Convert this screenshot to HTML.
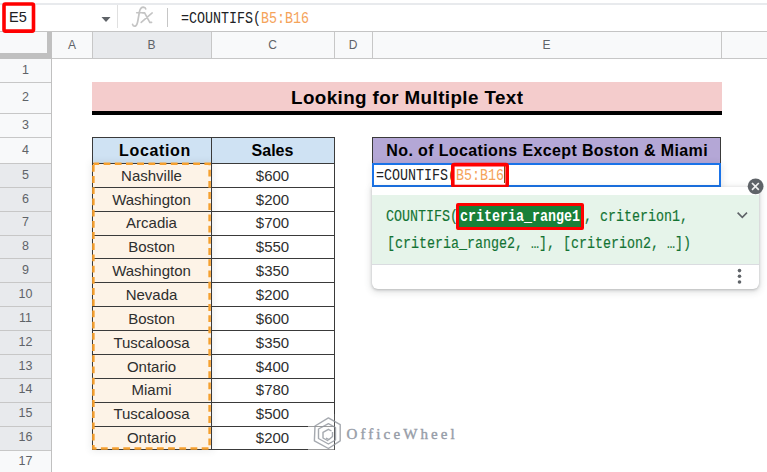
<!DOCTYPE html><html><head><meta charset="utf-8"><style>
*{margin:0;padding:0;box-sizing:border-box}
html,body{width:767px;height:472px;overflow:hidden;background:#fff;position:relative;font-family:"Liberation Sans",sans-serif}
.a{position:absolute}
.t{position:absolute;white-space:nowrap}
.mono{font-family:"Liberation Mono",monospace}
</style></head><body><div class="a" style="left:0;top:3px;width:767px;height:2px;background:#e8eaed"></div>
<div class="a" style="left:0;top:31px;width:767px;height:1px;background:#c4c4c4"></div>
<div class="t" style="left:9px;top:9px;font-size:14.5px;line-height:17px;color:#202124">E5</div>
<svg class="a" style="left:100px;top:15px" width="12" height="8"><path d="M1.5 2 L10.5 2 L6 7 Z" fill="#5f6368"/></svg>
<div class="a" style="left:117px;top:5px;width:1px;height:23px;background:#e0e0e0"></div>
<div class="a" style="left:167px;top:8px;width:1px;height:19px;background:#c6c6c6"></div>
<svg class="a" style="left:0;top:0" width="170" height="31"><g fill="none" stroke="#c4c4c4" stroke-linecap="round"><path d="M132.6 24.4 Q133.3 26.6 135.3 26.1 Q137.1 25.4 137.9 20.5 L139.5 11.5 Q140.6 7.2 143.3 7.2 Q145.4 7.3 145.7 8.9" stroke-width="1.7"/><path d="M136.6 12.7 L143.2 12.7" stroke-width="1.5"/><path d="M143 12.9 L144.6 12.9 L149.8 22.4 L151.6 22.4 M141.2 22.4 L152.2 12.9" stroke-width="1.6"/></g></svg>
<div class="t mono" style="left:180.5px;top:10.6px;font-size:16px;line-height:16px;transform:scaleX(0.8333);transform-origin:0 0;color:#202124;">=COUNTIFS(<span style="color:#f5a35a">B5:B16</span></div>
<div class="a" style="left:0;top:32px;width:767px;height:26px;background:#f8f9fa"></div>
<div class="a" style="left:93px;top:32px;width:118px;height:26px;background:#e8eaed"></div>
<div class="a" style="left:0;top:58px;width:767px;height:1px;background:#c7c7c7"></div>
<div class="a" style="left:92px;top:32px;width:1px;height:27px;background:#c7c7c7"></div>
<div class="a" style="left:211px;top:32px;width:1px;height:27px;background:#c7c7c7"></div>
<div class="a" style="left:334px;top:32px;width:1px;height:27px;background:#c7c7c7"></div>
<div class="a" style="left:372px;top:32px;width:1px;height:27px;background:#c7c7c7"></div>
<div class="a" style="left:721px;top:32px;width:1px;height:27px;background:#c7c7c7"></div>
<div class="t" style="left:52px;width:40px;text-align:center;top:38px;font-size:12px;line-height:14px;color:#5f6368">A</div>
<div class="t" style="left:92px;width:119px;text-align:center;top:38px;font-size:12px;line-height:14px;color:#5f6368">B</div>
<div class="t" style="left:211px;width:123px;text-align:center;top:38px;font-size:12px;line-height:14px;color:#5f6368">C</div>
<div class="t" style="left:334px;width:38px;text-align:center;top:38px;font-size:12px;line-height:14px;color:#5f6368">D</div>
<div class="t" style="left:372px;width:349px;text-align:center;top:38px;font-size:12px;line-height:14px;color:#5f6368">E</div>
<div class="a" style="left:47px;top:32px;width:5px;height:27px;background:#c0c0c0"></div>
<div class="a" style="left:0;top:53px;width:52px;height:6px;background:#c0c0c0"></div>
<div class="a" style="left:0;top:59px;width:51px;height:23px;background:#f8f9fa"></div>
<div class="a" style="left:0;top:82px;width:51px;height:1px;background:#c7c7c7"></div>
<div class="t" style="left:0;width:51px;text-align:center;top:62.5px;font-size:12.5px;line-height:15px;color:#5f6368">1</div>
<div class="a" style="left:0;top:83px;width:51px;height:30px;background:#f8f9fa"></div>
<div class="a" style="left:0;top:113px;width:51px;height:1px;background:#c7c7c7"></div>
<div class="t" style="left:0;width:51px;text-align:center;top:90.2px;font-size:12.5px;line-height:15px;color:#5f6368">2</div>
<div class="a" style="left:0;top:114px;width:51px;height:23px;background:#f8f9fa"></div>
<div class="a" style="left:0;top:137px;width:51px;height:1px;background:#c7c7c7"></div>
<div class="t" style="left:0;width:51px;text-align:center;top:117.5px;font-size:12.5px;line-height:15px;color:#5f6368">3</div>
<div class="a" style="left:0;top:138px;width:51px;height:25px;background:#f8f9fa"></div>
<div class="a" style="left:0;top:163px;width:51px;height:1px;background:#c7c7c7"></div>
<div class="t" style="left:0;width:51px;text-align:center;top:142.5px;font-size:12.5px;line-height:15px;color:#5f6368">4</div>
<div class="a" style="left:0;top:164px;width:51px;height:23px;background:#e8eaed"></div>
<div class="a" style="left:0;top:187px;width:51px;height:1px;background:#c7c7c7"></div>
<div class="t" style="left:0;width:51px;text-align:center;top:167.7px;font-size:12.5px;line-height:15px;color:#5f6368">5</div>
<div class="a" style="left:0;top:188px;width:51px;height:23px;background:#e8eaed"></div>
<div class="a" style="left:0;top:211px;width:51px;height:1px;background:#c7c7c7"></div>
<div class="t" style="left:0;width:51px;text-align:center;top:191.6px;font-size:12.5px;line-height:15px;color:#5f6368">6</div>
<div class="a" style="left:0;top:212px;width:51px;height:23px;background:#e8eaed"></div>
<div class="a" style="left:0;top:235px;width:51px;height:1px;background:#c7c7c7"></div>
<div class="t" style="left:0;width:51px;text-align:center;top:215.2px;font-size:12.5px;line-height:15px;color:#5f6368">7</div>
<div class="a" style="left:0;top:236px;width:51px;height:22px;background:#e8eaed"></div>
<div class="a" style="left:0;top:258px;width:51px;height:1px;background:#c7c7c7"></div>
<div class="t" style="left:0;width:51px;text-align:center;top:238.9px;font-size:12.5px;line-height:15px;color:#5f6368">8</div>
<div class="a" style="left:0;top:259px;width:51px;height:23px;background:#e8eaed"></div>
<div class="a" style="left:0;top:282px;width:51px;height:1px;background:#c7c7c7"></div>
<div class="t" style="left:0;width:51px;text-align:center;top:262.7px;font-size:12.5px;line-height:15px;color:#5f6368">9</div>
<div class="a" style="left:0;top:283px;width:51px;height:23px;background:#e8eaed"></div>
<div class="a" style="left:0;top:306px;width:51px;height:1px;background:#c7c7c7"></div>
<div class="t" style="left:0;width:51px;text-align:center;top:286.8px;font-size:12.5px;line-height:15px;color:#5f6368">10</div>
<div class="a" style="left:0;top:307px;width:51px;height:23px;background:#e8eaed"></div>
<div class="a" style="left:0;top:330px;width:51px;height:1px;background:#c7c7c7"></div>
<div class="t" style="left:0;width:51px;text-align:center;top:310.9px;font-size:12.5px;line-height:15px;color:#5f6368">11</div>
<div class="a" style="left:0;top:331px;width:51px;height:23px;background:#e8eaed"></div>
<div class="a" style="left:0;top:354px;width:51px;height:1px;background:#c7c7c7"></div>
<div class="t" style="left:0;width:51px;text-align:center;top:334.8px;font-size:12.5px;line-height:15px;color:#5f6368">12</div>
<div class="a" style="left:0;top:355px;width:51px;height:23px;background:#e8eaed"></div>
<div class="a" style="left:0;top:378px;width:51px;height:1px;background:#c7c7c7"></div>
<div class="t" style="left:0;width:51px;text-align:center;top:358.5px;font-size:12.5px;line-height:15px;color:#5f6368">13</div>
<div class="a" style="left:0;top:379px;width:51px;height:23px;background:#e8eaed"></div>
<div class="a" style="left:0;top:402px;width:51px;height:1px;background:#c7c7c7"></div>
<div class="t" style="left:0;width:51px;text-align:center;top:382.4px;font-size:12.5px;line-height:15px;color:#5f6368">14</div>
<div class="a" style="left:0;top:403px;width:51px;height:23px;background:#e8eaed"></div>
<div class="a" style="left:0;top:426px;width:51px;height:1px;background:#c7c7c7"></div>
<div class="t" style="left:0;width:51px;text-align:center;top:406.2px;font-size:12.5px;line-height:15px;color:#5f6368">15</div>
<div class="a" style="left:0;top:427px;width:51px;height:23px;background:#e8eaed"></div>
<div class="a" style="left:0;top:450px;width:51px;height:1px;background:#c7c7c7"></div>
<div class="t" style="left:0;width:51px;text-align:center;top:430.1px;font-size:12.5px;line-height:15px;color:#5f6368">16</div>
<div class="a" style="left:0;top:451px;width:51px;height:23px;background:#f8f9fa"></div>
<div class="a" style="left:0;top:474px;width:51px;height:1px;background:#c7c7c7"></div>
<div class="t" style="left:0;width:51px;text-align:center;top:454.0px;font-size:12.5px;line-height:15px;color:#5f6368">17</div>
<div class="a" style="left:51px;top:58px;width:1px;height:420px;background:#c0c0c0"></div>
<div class="a" style="left:92px;top:82px;width:630px;height:30px;background:#f4cccc"></div>
<div class="a" style="left:92px;top:111px;width:630px;height:3.5px;background:#000"></div>
<div class="t" style="left:92px;width:630px;text-align:center;top:87px;font-weight:bold;font-size:18.8px;letter-spacing:0.42px;text-indent:0.4px;line-height:21px;color:#000">Looking for Multiple Text</div>
<div class="a" style="left:92px;top:137px;width:243px;height:313px;border:1px solid #3a3a3a;background:#fff"></div>
<div class="a" style="left:93px;top:138px;width:241px;height:25px;background:#cfe2f3"></div>
<div class="a" style="left:93px;top:163px;width:118px;height:286px;background:#fdf3e7"></div>
<div class="a" style="left:211px;top:137px;width:1px;height:313px;background:#3a3a3a"></div>
<div class="t" style="left:92px;width:119px;text-align:center;top:141px;font-weight:bold;font-size:16px;letter-spacing:0.65px;text-indent:7px;line-height:19px;color:#000">Location</div>
<div class="t" style="left:211px;width:123px;text-align:center;top:141px;font-weight:bold;font-size:16px;line-height:19px;color:#000">Sales</div>
<div class="a" style="left:92px;top:163px;width:243px;height:1px;background:#3a3a3a"></div>
<div class="t" style="left:92px;width:119px;text-align:center;top:166.7px;font-size:15px;line-height:17px;color:#2e2e2e">Nashville</div>
<div class="t" style="left:211px;width:123px;text-align:center;top:166.7px;font-size:15px;line-height:17px;color:#2e2e2e">$600</div>
<div class="a" style="left:92px;top:187px;width:243px;height:1px;background:#3a3a3a"></div>
<div class="t" style="left:92px;width:119px;text-align:center;top:190.6px;font-size:15px;line-height:17px;color:#2e2e2e">Washington</div>
<div class="t" style="left:211px;width:123px;text-align:center;top:190.6px;font-size:15px;line-height:17px;color:#2e2e2e">$200</div>
<div class="a" style="left:92px;top:211px;width:243px;height:1px;background:#3a3a3a"></div>
<div class="t" style="left:92px;width:119px;text-align:center;top:214.2px;font-size:15px;line-height:17px;color:#2e2e2e">Arcadia</div>
<div class="t" style="left:211px;width:123px;text-align:center;top:214.2px;font-size:15px;line-height:17px;color:#2e2e2e">$700</div>
<div class="a" style="left:92px;top:235px;width:243px;height:1px;background:#3a3a3a"></div>
<div class="t" style="left:92px;width:119px;text-align:center;top:237.9px;font-size:15px;line-height:17px;color:#2e2e2e">Boston</div>
<div class="t" style="left:211px;width:123px;text-align:center;top:237.9px;font-size:15px;line-height:17px;color:#2e2e2e">$550</div>
<div class="a" style="left:92px;top:258px;width:243px;height:1px;background:#3a3a3a"></div>
<div class="t" style="left:92px;width:119px;text-align:center;top:261.7px;font-size:15px;line-height:17px;color:#2e2e2e">Washington</div>
<div class="t" style="left:211px;width:123px;text-align:center;top:261.7px;font-size:15px;line-height:17px;color:#2e2e2e">$350</div>
<div class="a" style="left:92px;top:282px;width:243px;height:1px;background:#3a3a3a"></div>
<div class="t" style="left:92px;width:119px;text-align:center;top:285.8px;font-size:15px;line-height:17px;color:#2e2e2e">Nevada</div>
<div class="t" style="left:211px;width:123px;text-align:center;top:285.8px;font-size:15px;line-height:17px;color:#2e2e2e">$200</div>
<div class="a" style="left:92px;top:306px;width:243px;height:1px;background:#3a3a3a"></div>
<div class="t" style="left:92px;width:119px;text-align:center;top:309.9px;font-size:15px;line-height:17px;color:#2e2e2e">Boston</div>
<div class="t" style="left:211px;width:123px;text-align:center;top:309.9px;font-size:15px;line-height:17px;color:#2e2e2e">$600</div>
<div class="a" style="left:92px;top:330px;width:243px;height:1px;background:#3a3a3a"></div>
<div class="t" style="left:92px;width:119px;text-align:center;top:333.8px;font-size:15px;line-height:17px;color:#2e2e2e">Tuscaloosa</div>
<div class="t" style="left:211px;width:123px;text-align:center;top:333.8px;font-size:15px;line-height:17px;color:#2e2e2e">$350</div>
<div class="a" style="left:92px;top:354px;width:243px;height:1px;background:#3a3a3a"></div>
<div class="t" style="left:92px;width:119px;text-align:center;top:357.5px;font-size:15px;line-height:17px;color:#2e2e2e">Ontario</div>
<div class="t" style="left:211px;width:123px;text-align:center;top:357.5px;font-size:15px;line-height:17px;color:#2e2e2e">$400</div>
<div class="a" style="left:92px;top:378px;width:243px;height:1px;background:#3a3a3a"></div>
<div class="t" style="left:92px;width:119px;text-align:center;top:381.4px;font-size:15px;line-height:17px;color:#2e2e2e">Miami</div>
<div class="t" style="left:211px;width:123px;text-align:center;top:381.4px;font-size:15px;line-height:17px;color:#2e2e2e">$780</div>
<div class="a" style="left:92px;top:402px;width:243px;height:1px;background:#3a3a3a"></div>
<div class="t" style="left:92px;width:119px;text-align:center;top:405.2px;font-size:15px;line-height:17px;color:#2e2e2e">Tuscaloosa</div>
<div class="t" style="left:211px;width:123px;text-align:center;top:405.2px;font-size:15px;line-height:17px;color:#2e2e2e">$500</div>
<div class="a" style="left:92px;top:426px;width:243px;height:1px;background:#3a3a3a"></div>
<div class="t" style="left:92px;width:119px;text-align:center;top:429.1px;font-size:15px;line-height:17px;color:#2e2e2e">Ontario</div>
<div class="t" style="left:211px;width:123px;text-align:center;top:429.1px;font-size:15px;line-height:17px;color:#2e2e2e">$200</div>
<div class="a" style="left:92px;top:162.5px;width:120px;height:287.5px;box-shadow:0 0 7px 1px rgba(60,64,67,0.10)"></div>
<svg class="a" style="left:90px;top:160px" width="125" height="293"><rect x="3.4" y="3.7" width="116.2" height="284.9" fill="none" stroke="#f6a02f" stroke-width="2.5" stroke-dasharray="6.8 4.4" stroke-dashoffset="1"/></svg>
<div class="a" style="left:372px;top:137px;width:349px;height:27px;border:1px solid #3a3a3a;background:#b4a7d6"></div>
<div class="t" style="left:372px;width:350px;text-align:center;top:141px;font-weight:bold;font-size:16px;letter-spacing:0.37px;text-indent:0.37px;line-height:19px;color:#000">No. of Locations Except Boston &amp; Miami</div>
<div class="a" style="left:372px;top:163px;width:349px;height:24px;border:2px solid #1a73e8;background:#fff;box-shadow:1px 1px 7px rgba(60,64,67,0.13)"></div>
<div class="t mono" style="left:376.3px;top:168px;font-size:16px;line-height:16px;transform:scaleX(0.8333);transform-origin:0 0;color:#202124;">=COUNTIFS(<span style="color:#f5a35a">B5:B16</span></div>
<div class="a" style="left:504px;top:166px;width:1px;height:17px;background:#7a4a10"></div>
<svg class="a" style="left:448px;top:160px" width="64" height="30"><rect x="4.8" y="4.6" width="54.4" height="22" rx="1.5" fill="none" stroke="#ff0000" stroke-width="3.6"/></svg>
<div class="a" style="left:372px;top:187px;width:387px;height:102px;background:#fff;border-radius:0 0 6px 6px;box-shadow:0 1px 3px rgba(60,64,67,.3),0 2px 6px 2px rgba(60,64,67,.12);overflow:hidden"><div class="a" style="left:0;top:8.4px;width:387px;height:69.6px;background:#e6f4ea;border-bottom:1px solid #dadce0"></div></div>
<div class="t mono" style="left:385.5px;top:208.8px;font-size:16px;line-height:16px;transform:scaleX(0.8333);transform-origin:0 0;color:#137333;-webkit-text-stroke:0.15px #137333">COUNTIFS(</div>
<div class="a" style="left:456.4px;top:202.5px;width:127.3px;height:27.2px;border:3.5px solid #ff0000;background:#188038;border-radius:2px"></div>
<div class="t mono" style="left:459.5px;top:208.7px;font-size:16px;line-height:16px;transform:scaleX(0.8333);transform-origin:0 0;color:#fff;font-weight:bold">criteria_range1</div>
<div class="t mono" style="left:583.7px;top:208.8px;font-size:16px;line-height:16px;transform:scaleX(0.8333);transform-origin:0 0;color:#137333;-webkit-text-stroke:0.15px #137333">, criterion1,</div>
<div class="t mono" style="left:386.5px;top:235.6px;font-size:16px;line-height:16px;transform:scaleX(0.8333);transform-origin:0 0;color:#137333;-webkit-text-stroke:0.15px #137333">[criteria_range2, …], [criterion2, …])</div>
<svg class="a" style="left:735px;top:209px" width="15" height="12"><path d="M2.6 3.6 L7.3 8.3 L12 3.6" fill="none" stroke="#5f6368" stroke-width="1.6"/></svg>
<svg class="a" style="left:735px;top:266px" width="10" height="20"><circle cx="4.5" cy="4.6" r="1.8" fill="#5f6368"/><circle cx="4.5" cy="10.3" r="1.8" fill="#5f6368"/><circle cx="4.5" cy="16" r="1.8" fill="#5f6368"/></svg>
<svg class="a" style="left:745px;top:176px" width="21" height="21"><circle cx="10.6" cy="10.3" r="7.9" fill="#5f6368"/><path d="M7 7 L13.8 13.8 M13.8 7 L7 13.8" stroke="#f1f1f1" stroke-width="1.7"/></svg>
<div class="a" style="left:308px;top:414px;width:150px;height:37px;background:rgba(255,255,255,0.5)"></div>
<div class="a" style="left:334px;top:414px;width:1px;height:36px;background:rgba(58,58,58,0.75)"></div>
<svg class="a" style="left:300px;top:410px" width="50" height="45"><g fill="none" stroke="#8f949c" stroke-width="1.4" opacity="0.8" stroke-linejoin="round"><path d="M28.4 7.9 L40.2 14.7 L40.2 30.8 L28.4 38.5 L14.4 30.8 L15 16 Z"/><path d="M35.5 17.5 L28.4 13.6 L18.5 19 L18.5 28.5 L28.4 34 L35.5 30 Z"/><path d="M31.5 21 L28.4 19.3 L23 22.3 L23 28 L28.4 31"/><path d="M26 28.2 L29 29.6 L32.5 26.5 L32.5 22"/></g></svg>
<div class="t" style="left:346.5px;top:426.5px;font-family:'Liberation Serif',serif;font-size:15px;letter-spacing:3.1px;line-height:15px;color:#979da8;-webkit-text-stroke:0.4px #979da8">OfficeWheel</div>
<svg class="a" style="left:0;top:0" width="40" height="36"><rect x="4" y="4" width="29.5" height="27.1" rx="1.3" fill="none" stroke="#ff0000" stroke-width="3.6"/></svg></body></html>
